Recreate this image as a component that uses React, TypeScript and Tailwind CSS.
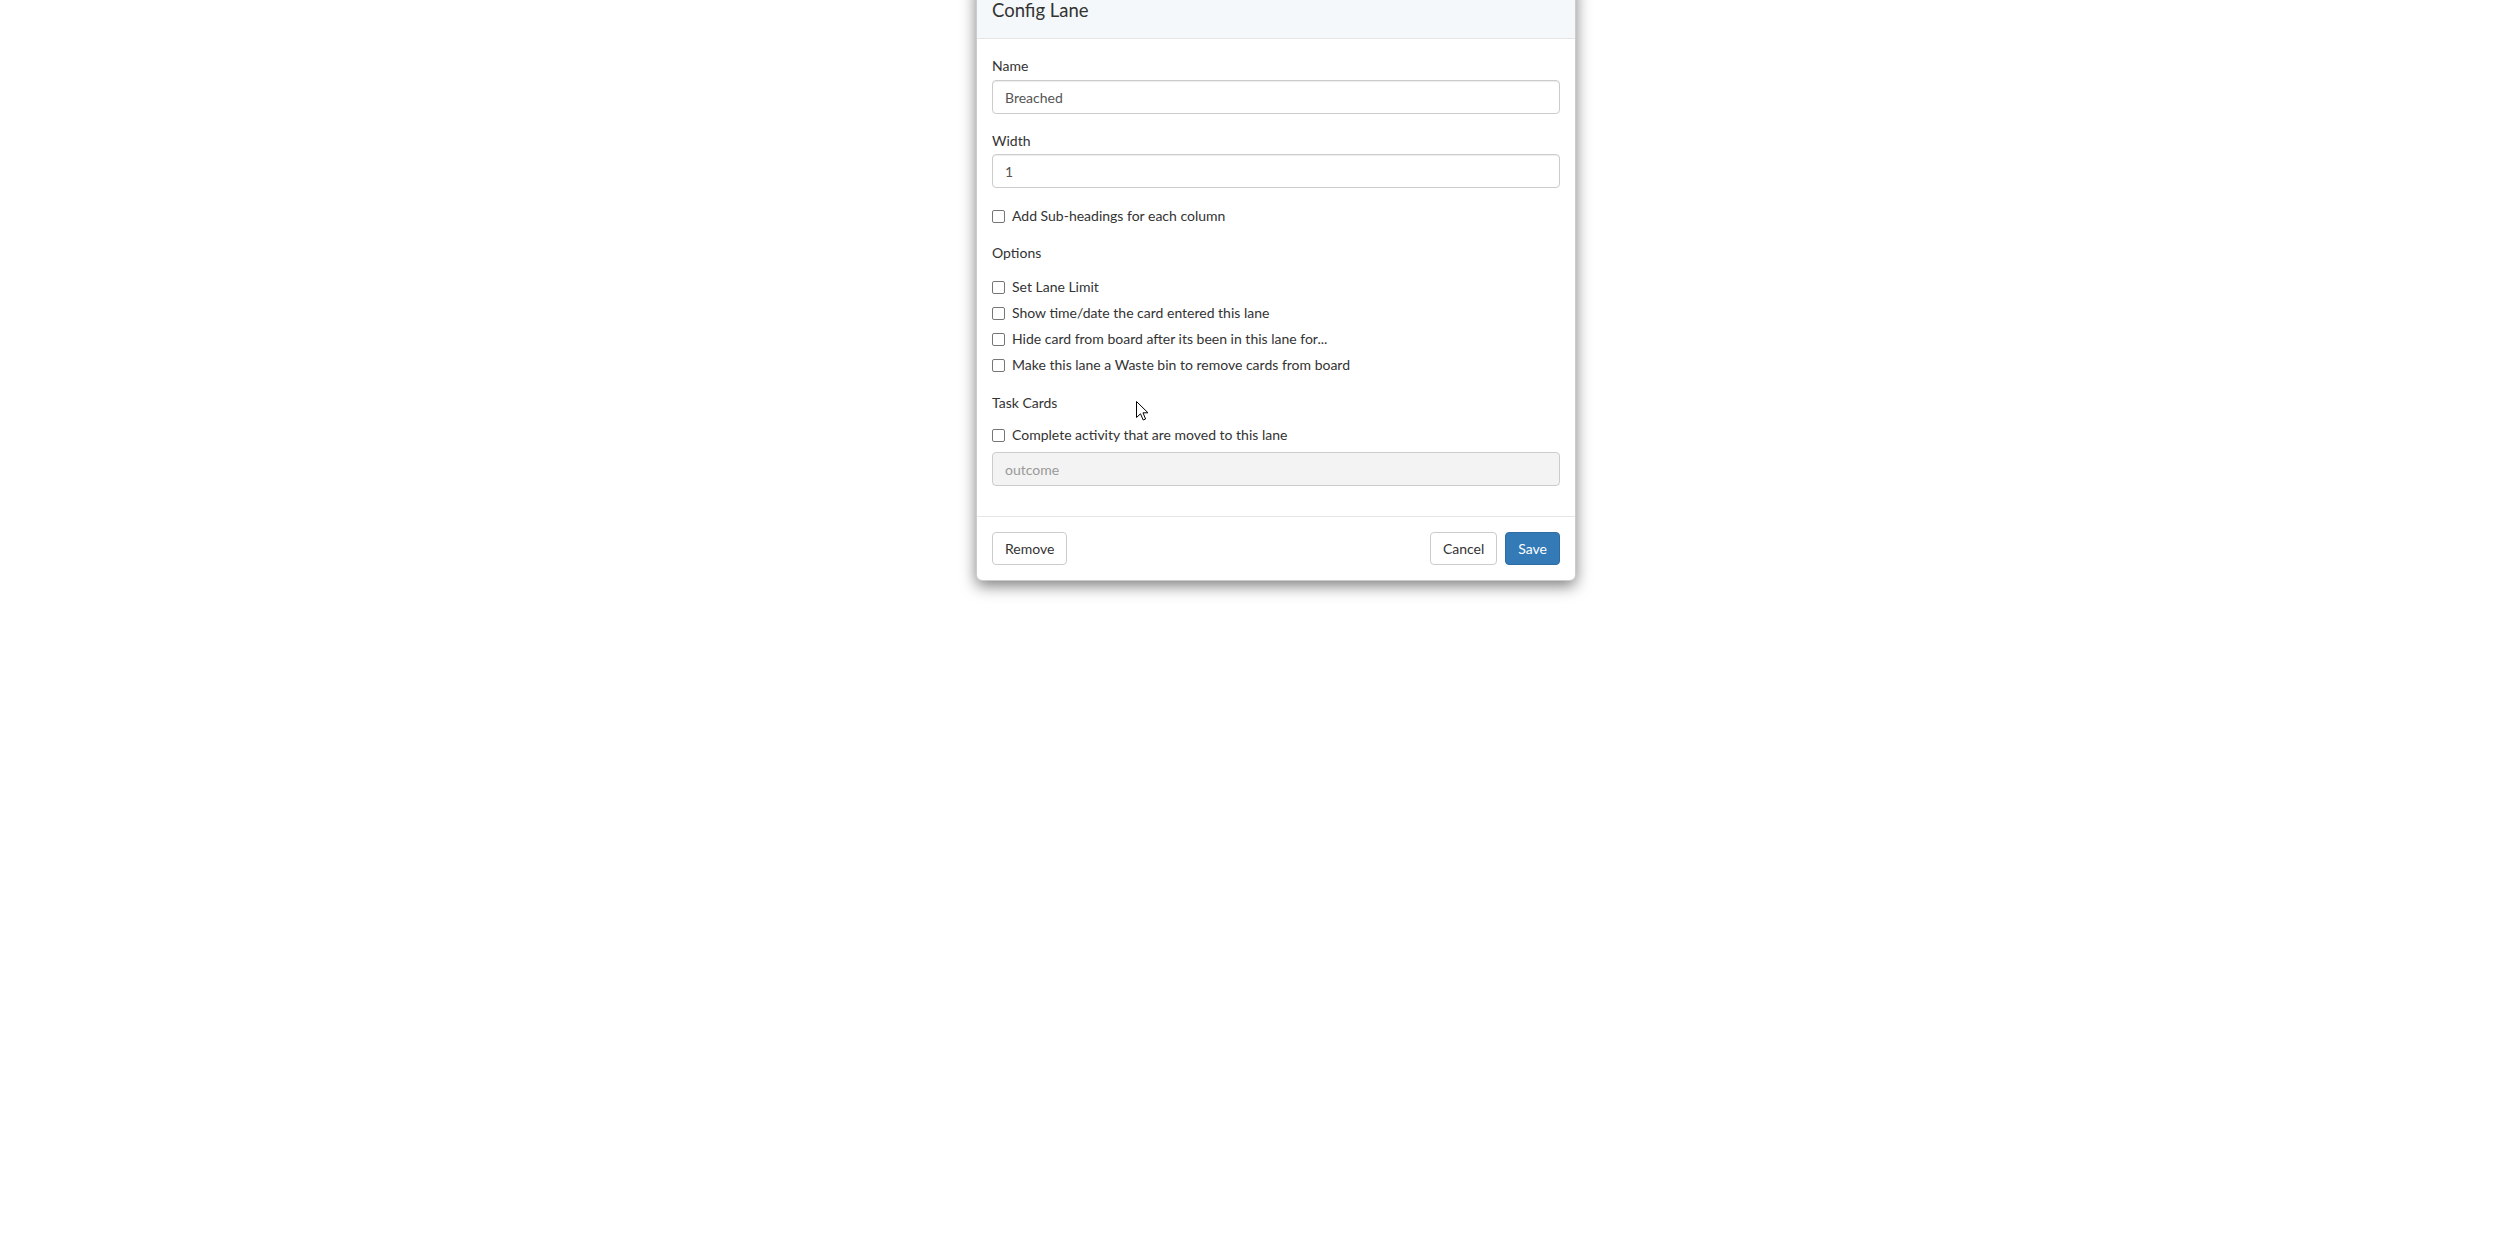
import React from 'react';

const font = { fontFamily: '"Lato", "Open Sans", "Liberation Sans", sans-serif' };

const Check: React.FC<{ label: string; className?: string }> = ({ label, className = '' }) => (
    <label className={`flex items-center h-5 leading-5 text-[14px] text-[#333] ${className}`}>
        <span className="w-[13px] h-[13px] border border-[#767676] rounded-[2px] bg-white shrink-0 mr-[7px]" />
        <span>{label}</span>
    </label>
);

const Cursor: React.FC = () => (
    <svg className="absolute left-[1136px] top-[401px] pointer-events-none" width="13" height="20" viewBox="0 0 13 20">
        <path d="M0.5 0.5 L0.5 16.5 L4.5 12.8 L7.2 19 L9.6 18 L7 11.8 L12 11.8 Z" fill="#fff" stroke="#000" strokeWidth="1" strokeLinejoin="round" />
    </svg>
);

const App: React.FC = () => {
    return (
        <div className="relative w-[2497px] h-[1256px] bg-white overflow-hidden" style={font}>
            <div className="ml-[976px] mt-[-19px] w-[600px] bg-white border border-black/20 rounded-[6px] shadow-[0_5px_15px_rgba(0,0,0,0.5)] overflow-hidden">
                <div className="bg-[#f5f8fa] border-b border-[#e5e5e5] px-[15px] py-[15px]">
                    <h4 className="text-[18.5px] leading-[26px] text-[#333]">Config Lane</h4>
                </div>

                <div className="px-[15px] pt-[15px] pb-[30px] flex flex-col">
                    <div className="pt-[2px] h-[22px] leading-5 text-[14px] text-[#333]">Name</div>
                    <input
                        readOnly
                        value="Breached"
                        className="mt-[4px] h-[34px] w-full border border-[#ccc] rounded-[4px] px-3 text-[14px] text-[#555] outline-none shadow-[inset_0_1px_1px_rgba(0,0,0,0.075)]"
                    />

                    <div className="mt-[15px] pt-[2px] h-[22px] leading-5 text-[14px] text-[#333]">Width</div>
                    <input
                        readOnly
                        value="1"
                        className="mt-[3px] h-[34px] w-full border border-[#ccc] rounded-[4px] px-3 text-[14px] text-[#555] outline-none shadow-[inset_0_1px_1px_rgba(0,0,0,0.075)]"
                    />

                    <Check label="Add Sub-headings for each column" className="mt-[18px]" />

                    <div className="mt-[15px] pt-[2px] h-[22px] leading-5 text-[14px] text-[#333]">Options</div>

                    <Check label="Set Lane Limit" className="mt-[14px]" />
                    <Check label="Show time/date the card entered this lane" className="mt-[6px]" />
                    <Check label="Hide card from board after its been in this lane for..." className="mt-[6px]" />
                    <Check label="Make this lane a Waste bin to remove cards from board" className="mt-[6px]" />

                    <div className="mt-[16px] pt-[2px] h-[22px] leading-5 text-[14px] text-[#333]">Task Cards</div>

                    <Check label="Complete activity that are moved to this lane" className="mt-[12px]" />

                    <input
                        disabled
                        placeholder="outcome"
                        className="mt-[7px] h-[34px] w-full border border-[#ccc] rounded-[4px] px-3 text-[14px] bg-[#f3f3f3] placeholder:text-[#999] outline-none"
                    />
                </div>

                <div className="border-t border-[#e5e5e5] p-[15px] flex items-center">
                    <button className="h-[33px] px-3 border border-[#ccc] rounded-[4px] bg-white text-[14px] text-[#333]">Remove</button>
                    <div className="ml-auto flex gap-2">
                        <button className="h-[33px] px-3 border border-[#ccc] rounded-[4px] bg-white text-[14px] text-[#333]">Cancel</button>
                        <button className="h-[33px] px-3 border border-[#2e6da4] rounded-[4px] bg-[#337ab7] text-[14px] text-white">Save</button>
                    </div>
                </div>
            </div>
            <Cursor />
        </div>
    );
};

export default App;
